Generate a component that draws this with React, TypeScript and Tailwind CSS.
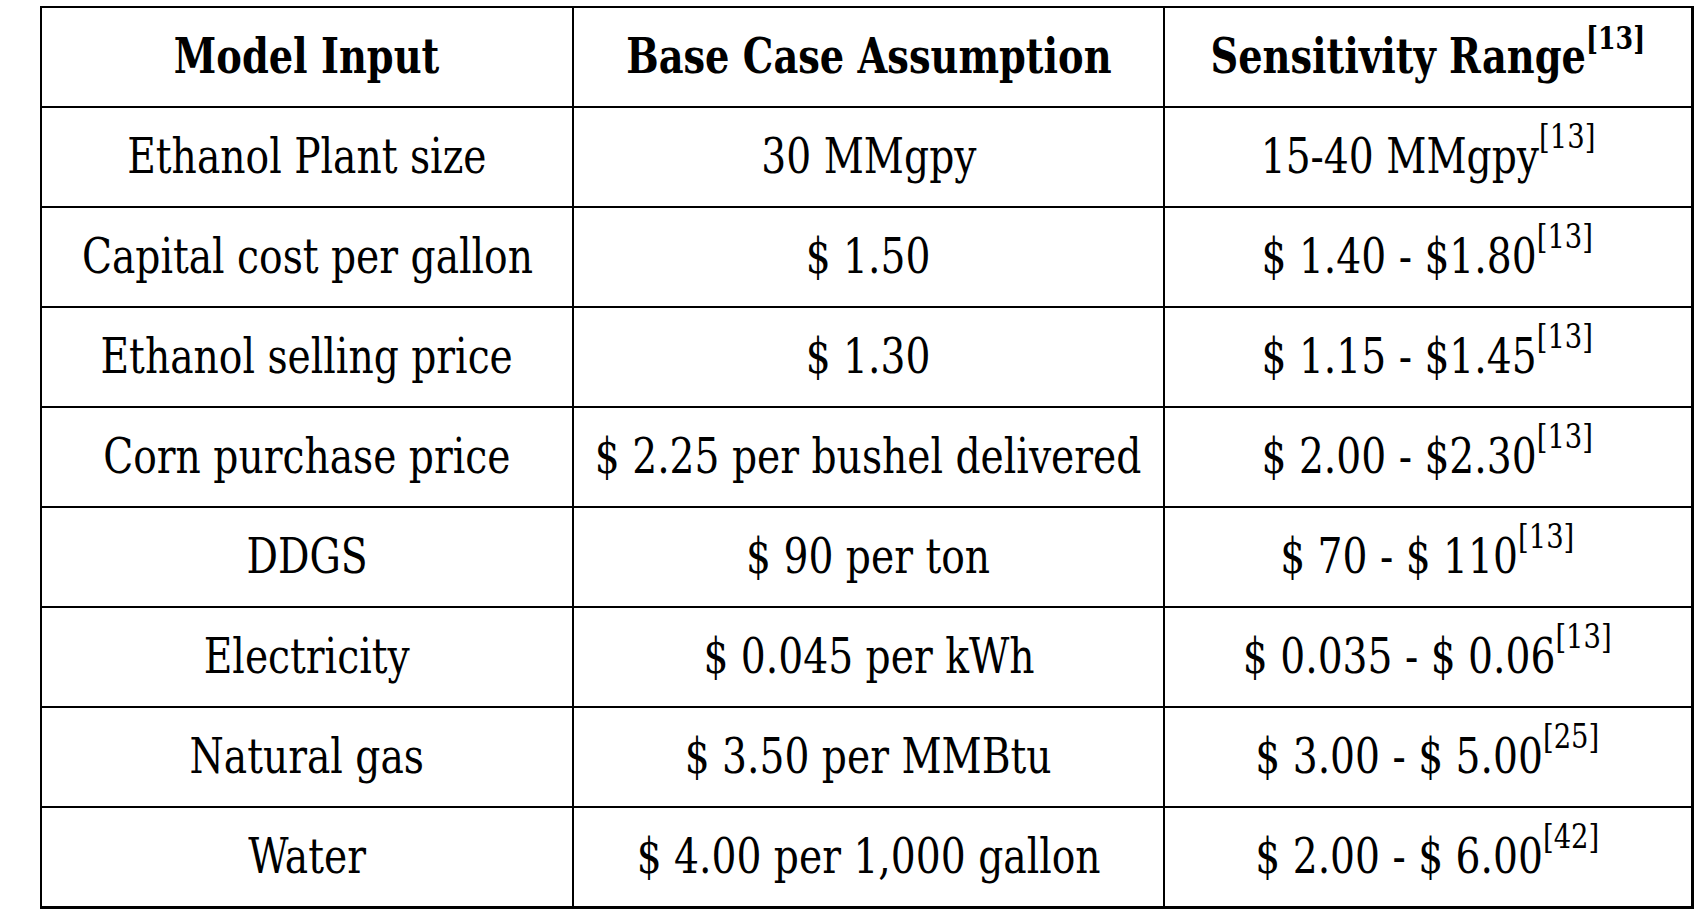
const rows: [string, string, string, string][] = [
  ['Ethanol Plant size', '30 MMgpy', '15-40 MMgpy', '13'],
  ['Capital cost per gallon', '$ 1.50', '$ 1.40 - $1.80', '13'],
  ['Ethanol selling price', '$ 1.30', '$ 1.15 - $1.45', '13'],
  ['Corn purchase price', '$ 2.25 per bushel delivered', '$ 2.00 - $2.30', '13'],
  ['DDGS', '$ 90 per ton', '$ 70 - $ 110', '13'],
  ['Electricity', '$ 0.045 per kWh', '$ 0.035 - $ 0.06', '13'],
  ['Natural gas', '$ 3.50 per MMBtu', '$ 3.00 - $ 5.00', '25'],
  ['Water', '$ 4.00 per 1,000 gallon', '$ 2.00 - $ 6.00', '42'],
]

const cell = 'border-2 border-black align-middle p-0'

function Ref({ n, head }: { n: string; head?: boolean }) {
  return (
    <sup className={`${head ? 'text-[0.66em]' : 'text-[0.7em]'} relative top-[-0.22em] align-super leading-none`}>
      [{n}]
    </sup>
  )
}

// text is squeezed horizontally like the original; flex keeps it centred even when it overflows
function Text({ children, head }: { children: React.ReactNode; head?: boolean }) {
  return (
    <div className="flex justify-center whitespace-nowrap">
      <span className={`inline-block shrink-0 ${head ? 'scale-x-[0.87]' : 'scale-x-[0.89]'}`}>{children}</span>
    </div>
  )
}

export default function App() {
  return (
    <div className="min-h-screen bg-white pl-[40px] pt-[6px] font-['DejaVu_Serif_Condensed','DejaVu_Serif',serif] font-stretch-condensed text-black">
      <table className="table-fixed border-collapse w-[1651px] border-b-[3px] border-r-[3px] border-black">
        <colgroup>
          <col className="w-[532px]" />
          <col className="w-[591px]" />
          <col className="w-[528px]" />
        </colgroup>
        <thead>
          <tr className="h-[100px] text-[49px] font-bold">
            <th className={cell}>
              <Text head>Model Input</Text>
            </th>
            <th className={cell}>
              <Text head>Base Case Assumption</Text>
            </th>
            <th className={cell}>
              <Text head>
                Sensitivity Range
                <Ref n="13" head />
              </Text>
            </th>
          </tr>
        </thead>
        <tbody>
          {rows.map(([input, base, range, ref]) => (
            <tr key={input} className="h-[100px] text-[49px]">
              <td className={cell}>
                <Text>{input}</Text>
              </td>
              <td className={cell}>
                <Text>{base}</Text>
              </td>
              <td className={cell}>
                <Text>
                  {range}
                  <Ref n={ref} />
                </Text>
              </td>
            </tr>
          ))}
        </tbody>
      </table>
    </div>
  )
}
